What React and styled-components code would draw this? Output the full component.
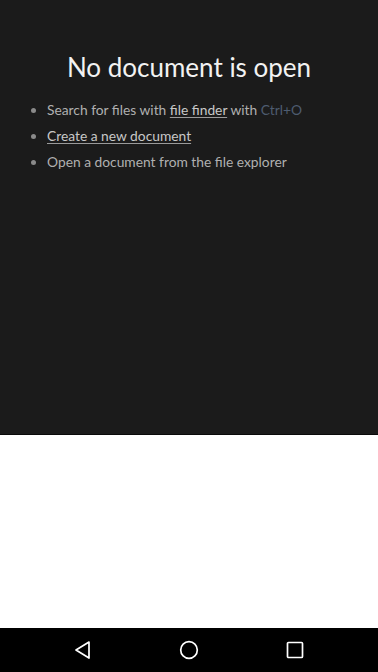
import styled, { createGlobalStyle } from 'styled-components';

const GlobalStyle = createGlobalStyle`
  html, body {
    margin: 0;
    padding: 0;
    background: #ffffff;
  }
  body {
    font-family: Lato, 'Open Sans', sans-serif;
  }
`;

const Screen = styled.div`
  display: flex;
  flex-direction: column;
  width: 378px;
  height: 672px;
`;

const Workspace = styled.div`
  background: #1b1b1b;
  height: 435px;
  border-bottom: 1px solid #0a0a0a;
  padding-top: 50px;
  box-sizing: border-box;
`;

const Title = styled.h1`
  margin: 0;
  text-align: center;
  color: #f2f2f2;
  font-weight: 400;
  font-size: 26px;
  line-height: 34px;
`;

const Actions = styled.ul`
  margin: 13px 0 0;
  padding: 0 0 0 47px;
  list-style: disc;
  color: #b0b0b0;
  font-size: 13.8px;
  line-height: 26px;

  li::marker {
    color: #8a8a8a;
  }
`;

const Link = styled.span`
  color: #c8c8c8;
  text-decoration: underline;
  text-decoration-color: #9a9a9a;
  text-underline-offset: 2px;
`;

const Hotkey = styled.span`
  color: #4e5c70;
`;

const Blank = styled.div`
  flex: 1;
  background: #ffffff;
`;

const NavBar = styled.div`
  height: 44px;
  background: #000000;
  display: flex;
  align-items: center;
  justify-content: center;
  gap: 66px;
`;

const NavButton = styled.div`
  width: 40px;
  display: flex;
  justify-content: center;
`;

export default function App() {
  return (
    <Screen>
      <GlobalStyle />
      <Workspace>
        <Title>No document is open</Title>
        <Actions>
          <li>
            Search for files with <Link>file finder</Link> with <Hotkey>Ctrl+O</Hotkey>
          </li>
          <li>
            <Link>Create a new document</Link>
          </li>
          <li>Open a document from the file explorer</li>
        </Actions>
      </Workspace>
      <Blank />
      <NavBar>
        <NavButton>
          <svg width="20" height="20" viewBox="0 0 20 20">
            <path d="M16 2 L3 10 L16 18 Z" fill="none" stroke="#fff" strokeWidth="1.7" strokeLinejoin="round" />
          </svg>
        </NavButton>
        <NavButton>
          <svg width="20" height="20" viewBox="0 0 20 20">
            <circle cx="10" cy="10" r="8.3" fill="none" stroke="#fff" strokeWidth="1.7" />
          </svg>
        </NavButton>
        <NavButton>
          <svg width="18" height="18" viewBox="0 0 18 18">
            <rect x="1.5" y="1.5" width="15" height="15" rx="1" fill="none" stroke="#fff" strokeWidth="1.7" />
          </svg>
        </NavButton>
      </NavBar>
    </Screen>
  );
}
